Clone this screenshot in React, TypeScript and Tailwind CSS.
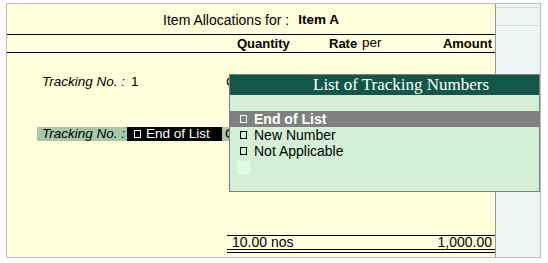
const Box = ({ light }: { light?: boolean }) => (
  <span
    className={
      'inline-block w-[7px] h-[8px] shrink-0 border ' + (light ? 'border-white' : 'border-black')
    }
  />
);

const rows = [
  { label: 'New Number' },
  { label: 'Not Applicable' },
];

export default function App() {
  return (
    <div className="min-h-[263px] bg-white pt-[3px] pl-[6px] font-['Liberation_Sans',Arial,sans-serif] text-[13.5px] text-black whitespace-nowrap">
      <div className="relative flex w-[535px] h-[255px] border border-[#bdbdbd]">
        {/* main yellow sheet */}
        <div className="flex flex-col w-[488px] bg-[#ffffdc]">
          <div className="flex h-[30px] items-center justify-center pt-[2px] text-[14px]">
            <span>Item Allocations for :</span>
            <span className="ml-[9px] font-bold text-[13.5px]">Item A</span>
          </div>
          <div className="flex h-[19px] items-center border-y border-black font-bold text-[13px]">
            <div className="w-[230px]" />
            <div className="w-[92px]">Quantity</div>
            <div className="w-[33px]">Rate</div>
            <div className="w-[40px] font-normal text-[13.5px]">per</div>
            <div className="flex-1 pr-[3px] text-right">Amount</div>
          </div>

          <div className="mt-[21px] flex h-[16px] items-center">
            <div className="w-[35px]" />
            <div className="w-[89px] italic">Tracking No. :</div>
            <div className="w-[95px]">1</div>
            <div>C</div>
          </div>

          <div className="mt-[37px] ml-[30px] flex h-[14px] w-[210px] items-center bg-[#a8c8a8] leading-[14px]">
            <div className="w-[90px] pl-[5px] italic">Tracking No. :</div>
            <div className="flex h-full w-[95px] items-center gap-[5px] bg-black pl-[7px] text-white">
              <Box light />
              <span>End of List</span>
            </div>
            <div className="pl-[3px]">C</div>
          </div>

          <div className="mt-auto ml-[220px] mb-[4px]">
            <div className="flex h-[18px] items-center border-double border-black border-t border-b-[4px] pl-[5px] pr-[3px] text-[14px]">
              <span className="flex-1">10.00 nos</span>
              <span>1,000.00</span>
            </div>
          </div>
        </div>

        {/* right side panel */}
        <div className="flex-1 border-l border-[#9a9a9a] bg-[#eef5f5]">
          <div className="mt-[3px] h-[19px] border-y border-[#d6dcdc]" />
        </div>

        {/* popup list */}
        <div className="absolute left-[222px] top-[70px] w-[311px] h-[118px] border border-[#7f7f7f] bg-[#d3efd6]">
          <div className="flex h-[20px] items-center bg-[#13564a] pl-[83px] font-['Liberation_Serif','Times_New_Roman',serif] text-[17px] text-white">
            List of Tracking Numbers
          </div>
          <div className="h-[16px]" />
          <div className="flex h-[16px] items-center gap-[7px] bg-[#808080] pl-[10px] font-bold text-white text-[14px]">
            <Box light />
            <span>End of List</span>
          </div>
          {rows.map((r) => (
            <div key={r.label} className="flex h-[16px] items-center gap-[7px] pl-[10px] text-[14px]">
              <Box />
              <span>{r.label}</span>
            </div>
          ))}
          <div className="ml-[7px] mt-[2px] h-[13px] w-[13px] bg-[#e0fce0]" />
        </div>
      </div>
    </div>
  );
}
